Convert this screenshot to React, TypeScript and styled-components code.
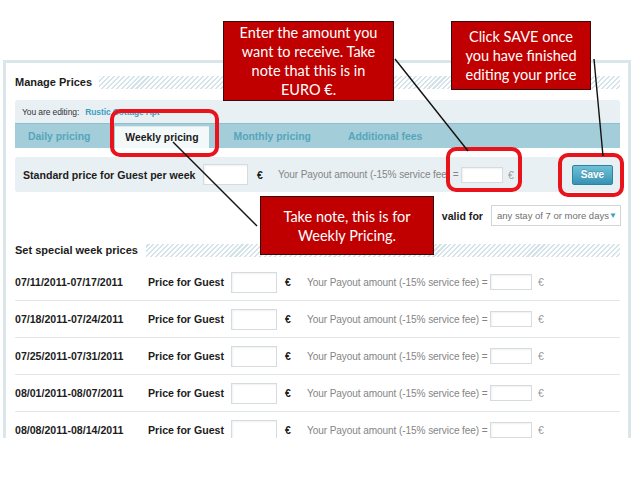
import React from "react";
import styled, { createGlobalStyle } from "styled-components";

const GlobalStyle = createGlobalStyle`
  html, body {
    margin: 0;
    padding: 0;
    background: #ffffff;
  }
  body {
    font-family: "Liberation Sans", Arial, sans-serif;
  }
`;

const Page = styled.div`
  position: relative;
  width: 638px;
  height: 478px;
  overflow: hidden;
  background: #fff;
`;

const Panel = styled.div`
  margin: 60px 0 0 3px;
  width: 605px;
  height: 363px;
  border: 3px solid #dbe6eb;
  border-bottom: none;
  padding: 12px 8px 0 9px;
  overflow: hidden;
  background: #fff;
`;

const SectionHead = styled.div<{ $top?: number }>`
  display: flex;
  align-items: center;
  height: 14px;
  margin-top: ${(p) => p.$top ?? 0}px;
`;

const SectionTitle = styled.span`
  font-size: 11px;
  font-weight: bold;
  color: #1c1c1c;
  white-space: nowrap;
`;

const Hatch = styled.div<{ $gap: number }>`
  flex: 1;
  height: 13px;
  margin-left: ${(p) => p.$gap}px;
  background: repeating-linear-gradient(
    -45deg,
    #ffffff 0px,
    #ffffff 2px,
    #d3e3e9 2px,
    #d3e3e9 3.5px
  );
`;

const EditBox = styled.div`
  margin-top: 11px;
  background: #e8f0f3;
  border-radius: 3px 3px 0 0;
`;

const EditingLine = styled.div`
  height: 23px;
  display: flex;
  align-items: center;
  padding-left: 7px;
  font-size: 8.5px;
  color: #333;
  letter-spacing: -0.1px;
`;

const Property = styled.span`
  margin-left: 6px;
  color: #3d9fc0;
  font-weight: bold;
`;

const TabBar = styled.div`
  height: 24px;
  display: flex;
  align-items: flex-end;
  gap: 13px;
  padding-left: 1px;
  background: #a3cdd8;
  border-top: 1px solid #8fbfcc;
`;

const Tab = styled.div<{ $active?: boolean }>`
  height: ${(p) => (p.$active ? 21 : 24)}px;
  display: flex;
  align-items: center;
  padding: 0 ${(p) => (p.$active ? 10 : 12)}px;
  font-size: 10.4px;
  font-weight: bold;
  white-space: nowrap;
  color: ${(p) => (p.$active ? "#1a1a1a" : "#57a5bc")};
  background: ${(p) => (p.$active ? "#f3f8f9" : "transparent")};
  box-shadow: ${(p) => (p.$active ? "0 -1px 0 #dce9ed" : "none")};
`;

const StandardRow = styled.div`
  margin-top: 9px;
  height: 35px;
  display: flex;
  align-items: center;
  padding-left: 8px;
  background: #e9f0f3;
  border-radius: 3px;
`;

const BoldLabel = styled.span<{ $w: number }>`
  width: ${(p) => p.$w}px;
  flex: none;
  font-size: 10.6px;
  font-weight: bold;
  color: #1c1c1c;
  white-space: nowrap;
`;

const PriceInput = styled.div<{ $w: number; $h: number }>`
  width: ${(p) => p.$w}px;
  height: ${(p) => p.$h}px;
  flex: none;
  box-sizing: border-box;
  background: #fff;
  border: 1px solid #d4dcdf;
  box-shadow: inset 1px 1px 2px rgba(0, 0, 0, 0.06);
`;

const Euro = styled.span<{ $left: number; $w: number; $light?: boolean }>`
  margin-left: ${(p) => p.$left}px;
  width: ${(p) => p.$w}px;
  flex: none;
  font-size: 10.5px;
  font-weight: ${(p) => (p.$light ? "normal" : "bold")};
  color: ${(p) => (p.$light ? "#9a9a9a" : "#1c1c1c")};
`;

const Payout = styled.span`
  width: 183px;
  flex: none;
  font-size: 10.1px;
  color: #858585;
  white-space: nowrap;
  letter-spacing: -0.1px;
`;

const SaveButton = styled.button`
  margin-left: auto;
  margin-right: 7px;
  width: 41px;
  height: 20px;
  padding: 0;
  border: 1px solid #2c83a2;
  border-radius: 2px;
  background: linear-gradient(#6ec1d7, #3793b3);
  color: #fff;
  font-family: "Liberation Sans", Arial, sans-serif;
  font-size: 10px;
  font-weight: bold;
  text-shadow: 0 -1px 0 rgba(0, 0, 0, 0.2);
`;

const ValidRow = styled.div`
  margin-top: 13px;
  display: flex;
  justify-content: flex-end;
  align-items: center;
  gap: 8px;
  height: 21px;
`;

const ValidLabel = styled.span`
  font-size: 10.6px;
  font-weight: bold;
  color: #1c1c1c;
`;

const Select = styled.div`
  width: 130px;
  height: 21px;
  box-sizing: border-box;
  border: 1px solid #cfd6d9;
  display: flex;
  align-items: center;
  justify-content: space-between;
  padding: 0 3px 0 5px;
  font-size: 9.5px;
  color: #707070;
  margin-right: -1px;
`;

const Caret = styled.span`
  color: #3d9fc0;
  font-size: 8px;
`;

const WeekList = styled.div`
  margin-top: 7px;
`;

const WeekRow = styled.div`
  height: 36px;
  display: flex;
  align-items: center;
  border-bottom: 1px solid #e3e6e7;
`;

const Overlay = styled.svg`
  position: absolute;
  left: 0;
  top: 0;
  width: 638px;
  height: 478px;
  pointer-events: none;
`;

const Callout = styled.div<{ $x: number; $y: number; $w: number; $h: number }>`
  position: absolute;
  left: ${(p) => p.$x}px;
  top: ${(p) => p.$y}px;
  width: ${(p) => p.$w}px;
  height: ${(p) => p.$h}px;
  box-sizing: border-box;
  background: #c00000;
  border: 1.5px solid #3a0b0b;
  display: flex;
  align-items: center;
  justify-content: center;
  text-align: center;
  color: #fff;
  font-family: Lato, "Open Sans", sans-serif;
  font-size: 14.5px;
  line-height: 19px;
`;

const weeks = [
  "07/11/2011-07/17/2011",
  "07/18/2011-07/24/2011",
  "07/25/2011-07/31/2011",
  "08/01/2011-08/07/2011",
  "08/08/2011-08/14/2011",
];

const App = () => {
  return (
    <Page>
      <GlobalStyle />
      <Panel>
        <SectionHead>
          <SectionTitle>Manage Prices</SectionTitle>
          <Hatch $gap={7} />
        </SectionHead>

        <EditBox>
          <EditingLine>
            You are editing:
            <Property>Rustic Cottage Apt</Property>
          </EditingLine>
          <TabBar>
            <Tab>Daily pricing</Tab>
            <Tab $active>Weekly pricing</Tab>
            <Tab>Monthly pricing</Tab>
            <Tab>Additional fees</Tab>
          </TabBar>
        </EditBox>

        <StandardRow>
          <BoldLabel $w={180}>Standard price for Guest per week</BoldLabel>
          <PriceInput $w={45} $h={21} />
          <Euro $left={9} $w={21}>€</Euro>
          <Payout>Your Payout amount (-15% service fee) =</Payout>
          <PriceInput $w={42} $h={16} />
          <Euro $left={5} $w={10} $light>€</Euro>
          <SaveButton>Save</SaveButton>
        </StandardRow>

        <ValidRow>
          <ValidLabel>valid for</ValidLabel>
          <Select>
            any stay of 7 or more days <Caret>▼</Caret>
          </Select>
        </ValidRow>

        <SectionHead $top={17}>
          <SectionTitle>Set special week prices</SectionTitle>
          <Hatch $gap={8} />
        </SectionHead>

        <WeekList>
          {weeks.map((w) => (
            <WeekRow key={w}>
              <BoldLabel $w={133}>{w}</BoldLabel>
              <BoldLabel $w={83}>Price for Guest</BoldLabel>
              <PriceInput $w={46} $h={21} />
              <Euro $left={8} $w={22}>€</Euro>
              <Payout>Your Payout amount (-15% service fee) =</Payout>
              <PriceInput $w={42} $h={16} />
              <Euro $left={6} $w={10} $light>€</Euro>
            </WeekRow>
          ))}
        </WeekList>
      </Panel>

      <Overlay viewBox="0 0 638 478">
        <g fill="none" stroke="#e8131b" strokeWidth={4}>
          <rect x={112} y={111} width={105} height={44} rx={8} />
          <rect x={448} y={149} width={72} height={41} rx={8} />
          <rect x={560} y={155} width={62} height={40} rx={8} />
        </g>
        <g stroke="#111" strokeWidth={1.4}>
          <line x1={395} y1={59} x2={468} y2={151} />
          <line x1={594} y1={59} x2={603} y2={156} />
          <line x1={173} y1={142} x2={257} y2={226} />
        </g>
      </Overlay>

      <Callout $x={223} $y={21} $w={171} $h={80}>
        Enter the amount you
        <br />
        want to receive. Take
        <br />
        note that this is in
        <br />
        EURO €.
      </Callout>
      <Callout $x={451} $y={21} $w={140} $h={69}>
        Click SAVE once
        <br />
        you have finished
        <br />
        editing your price
      </Callout>
      <Callout $x={260} $y={196} $w={174} $h={59}>
        Take note, this is for
        <br />
        Weekly Pricing.
      </Callout>
    </Page>
  );
};

export default App;
